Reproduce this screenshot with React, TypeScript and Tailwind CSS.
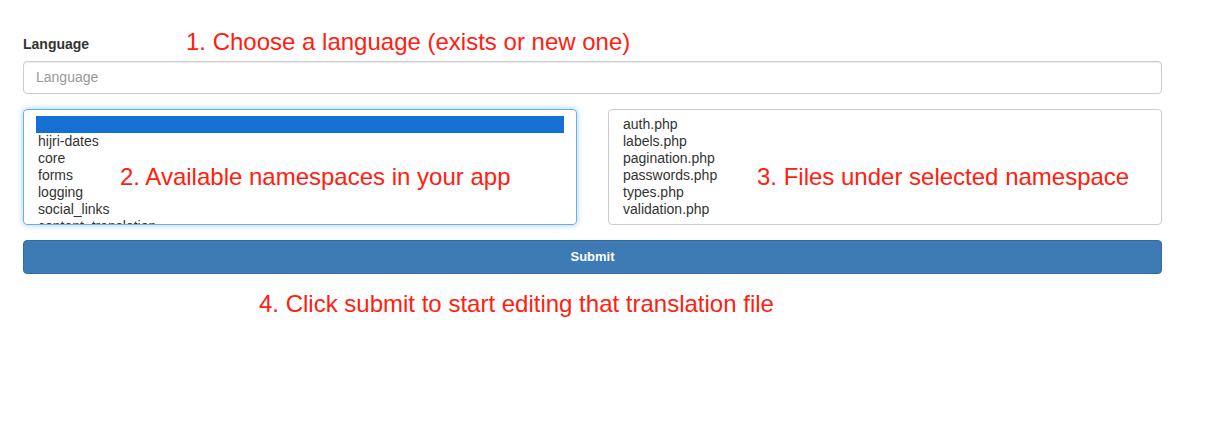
const namespaces = ["", "hijri-dates", "core", "forms", "logging", "social_links", "content_translation"];
const files = ["auth.php", "labels.php", "pagination.php", "passwords.php", "types.php", "validation.php"];

function Note({ className, children }: { className: string; children: React.ReactNode }) {
  return (
    <div className={`absolute whitespace-nowrap text-[24px] leading-[26px] text-[#ff2010] ${className}`}>
      {children}
    </div>
  );
}

export default function App() {
  return (
    <div className="relative h-[428px] w-[1209px] overflow-hidden bg-white font-['Liberation_Sans',Arial,sans-serif] text-[14px] text-[#333]">
      <form className="w-[1139px] ml-[23px] pt-[34px]">
        {/* Language */}
        <label className="block font-bold leading-[20px] mb-[7px]">Language</label>
        <div className="h-[33px] rounded-[4px] border border-[#ccc] shadow-[inset_0_1px_1px_rgba(0,0,0,0.075)] flex items-center px-[12px] text-[#999]">
          Language
        </div>

        {/* Namespaces / files */}
        <div className="grid grid-cols-2 gap-[31px] mt-[15px]">
          <div className="h-[116px] overflow-hidden rounded-[4px] border border-[#66afe9] shadow-[0_0_6px_rgba(102,175,233,0.6)] px-[12px] pt-[6px]">
            {namespaces.map((n, i) => (
              <div
                key={i}
                className={`h-[17px] leading-[17px] px-[2px] ${i === 0 ? "bg-[#1470d3] text-white" : ""}`}
              >
                {n}
              </div>
            ))}
          </div>
          <div className="h-[116px] overflow-hidden rounded-[4px] border border-[#ccc] px-[12px] pt-[6px]">
            {files.map((f) => (
              <div key={f} className="h-[17px] leading-[17px] px-[2px]">
                {f}
              </div>
            ))}
          </div>
        </div>

        <button
          type="button"
          className="mt-[15px] w-full h-[34px] rounded-[4px] border border-[#2e6da4] bg-[#3e7ab3] text-white font-bold text-[13px]"
        >
          Submit
        </button>
      </form>

      <Note className="left-[186px] top-[29px]">1. Choose a language (exists or new one)</Note>
      <Note className="left-[120px] top-[164px]">2. Available namespaces in your app</Note>
      <Note className="left-[757px] top-[164px]">3. Files under selected namespace</Note>
      <Note className="left-[259px] top-[291px]">4. Click submit to start editing that translation file</Note>
    </div>
  );
}
